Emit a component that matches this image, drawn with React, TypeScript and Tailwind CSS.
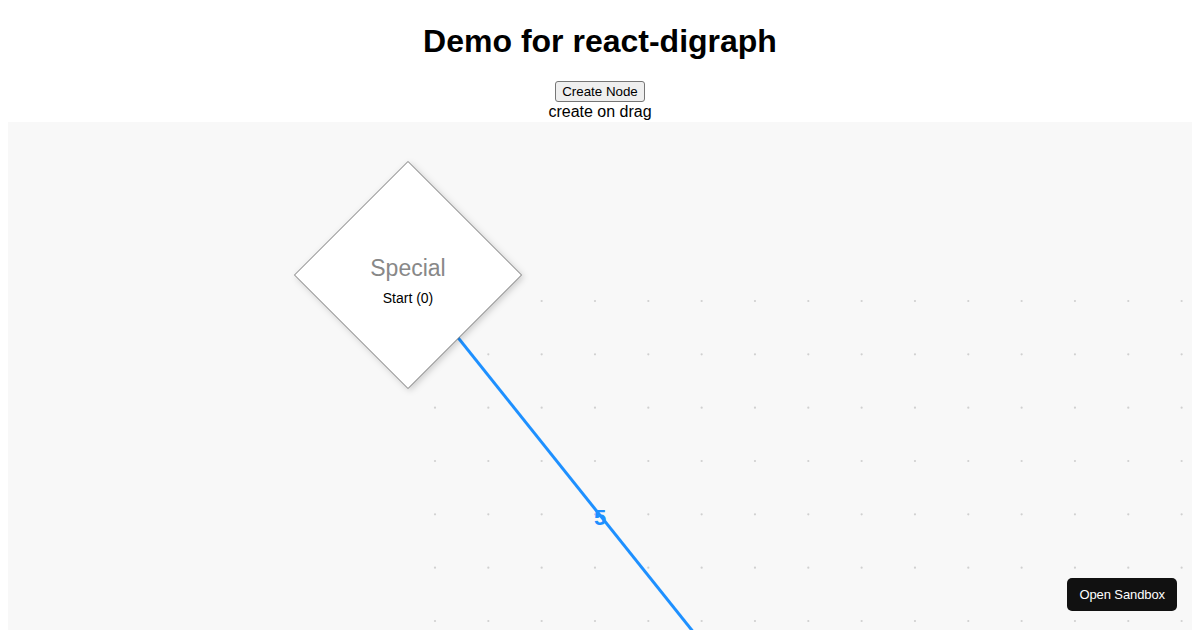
import React from 'react'

const STEP = 53.33
const cols = Array.from({ length: 15 }, (_, i) => 427 + i * STEP)
const rows = Array.from({ length: 7 }, (_, i) => 179 + i * STEP)

// diamond center in canvas coords
const CX = 400
const CY = 153
const HALF = 113.5

const insideDiamond = (x: number, y: number) =>
  Math.abs(x - CX) + Math.abs(y - CY) < HALF + 2

const Graph = () => {
  return (
    <svg className='absolute inset-0 w-full h-full' width='1184' height='508'>
      <defs>
        <filter id='node-shadow' x='-20%' y='-20%' width='140%' height='140%'>
          <feDropShadow dx='2' dy='2' stdDeviation='3' floodColor='#000' floodOpacity='0.18' />
        </filter>
      </defs>

      {/* grid dots */}
      {rows.map(y =>
        cols.map(x =>
          insideDiamond(x, y) ? null : (
            <circle key={`${x}-${y}`} cx={x} cy={y} r='1.1' fill='#d0d0d0' />
          )
        )
      )}

      {/* edge */}
      <line x1={CX} y1={CY} x2={CX + 0.7993 * 420} y2={CY + 420} stroke='#1e90ff' strokeWidth='3' />
      <text
        x='592'
        y='403'
        textAnchor='middle'
        fill='#1e90ff'
        fontSize='22'
        fontWeight='bold'
        fontFamily='"Liberation Sans", Arial, sans-serif'
      >
        5
      </text>

      {/* node */}
      <polygon
        points={`${CX},${CY - HALF} ${CX + HALF},${CY} ${CX},${CY + HALF} ${CX - HALF},${CY}`}
        fill='#fff'
        stroke='#555'
        strokeWidth='0.8'
        filter='url(#node-shadow)'
      />
      <text
        x={CX}
        y={CY + 1}
        textAnchor='middle'
        fill='#888'
        fontSize='23'
        fontFamily='"Liberation Sans", Arial, sans-serif'
      >
        Special
      </text>
      <text
        x={CX}
        y={CY + 28}
        textAnchor='middle'
        fill='#000'
        fontSize='14'
        fontFamily='"Liberation Sans", Arial, sans-serif'
      >
        Start (0)
      </text>
    </svg>
  )
}

const App = () => {
  return (
    <main className='w-full h-[630px] overflow-hidden bg-white text-black font-["Liberation_Sans",Arial,sans-serif]'>
      <h1 className='text-center text-[32px] leading-[37px] font-bold pt-[23px] pb-[21px]'>
        Demo for react-digraph
      </h1>
      <div className='flex justify-center'>
        <button className='bg-[#efefef] border border-[#767676] rounded-[3px] px-[6px] h-[21px] text-[13.33px] leading-none'>
          Create Node
        </button>
      </div>
      <div className='text-center text-base leading-[18px] mt-[1px]'>create on drag</div>
      <section className='relative mx-2 mt-[1px] h-[508px] bg-[#f8f8f8] overflow-hidden'>
        <Graph />
      </section>
      <button className='fixed right-[23px] bottom-[19px] h-[33px] px-[12px] rounded-[5px] bg-[#111] text-white text-[13px] tracking-[-0.1px]'>
        Open Sandbox
      </button>
    </main>
  )
}

export default App
